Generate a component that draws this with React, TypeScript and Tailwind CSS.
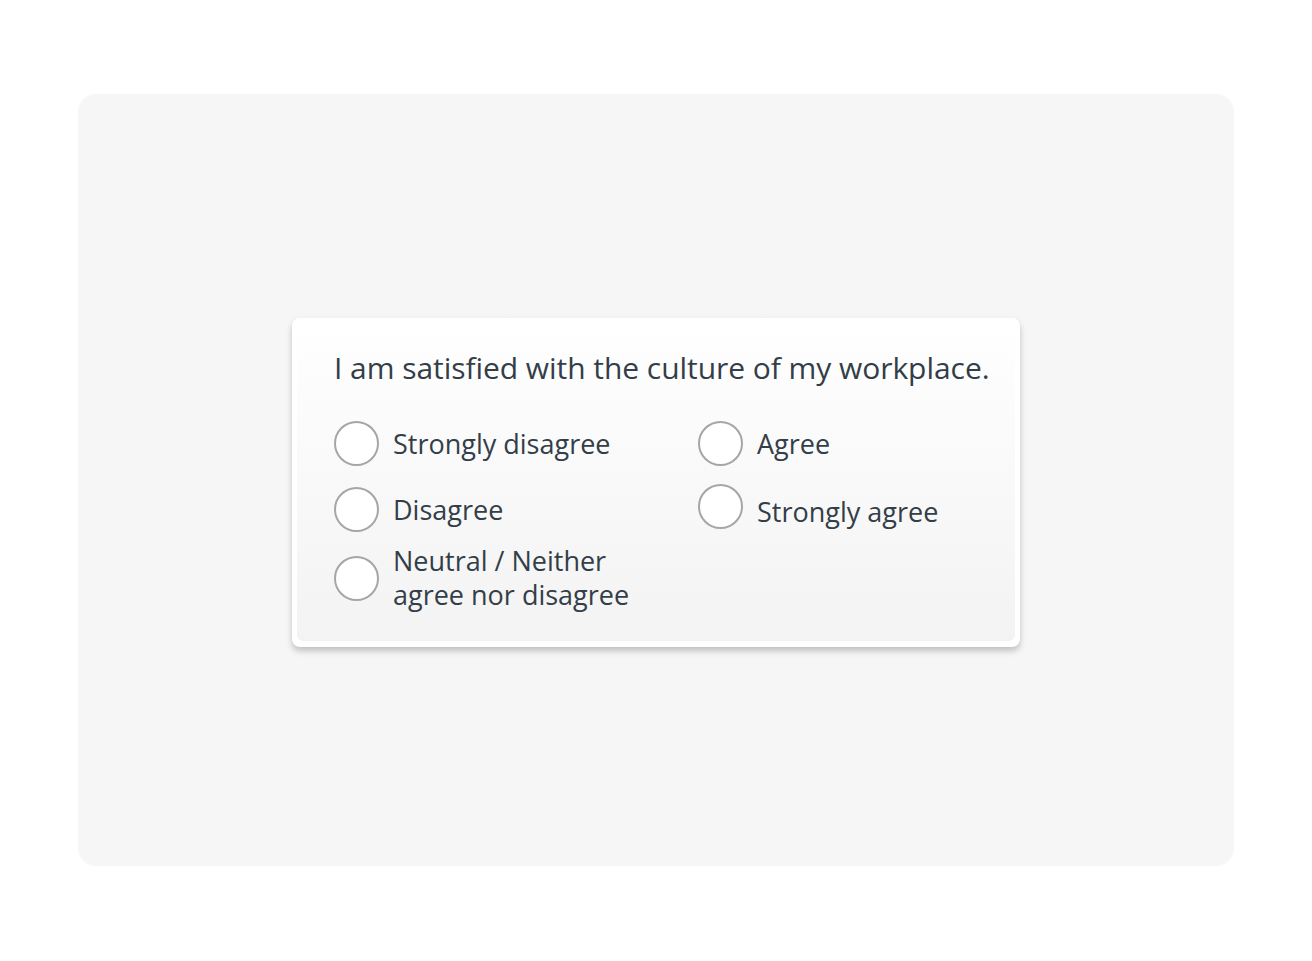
import React from 'react'

const font = { fontFamily: '"Open Sans", "Noto Sans", Arial, sans-serif' }

function Radio({ label, shift = 0 }: { label: React.ReactNode; shift?: number }) {
  return (
    <div className="flex items-center gap-[14px]">
      <span className="block w-[45px] h-[45px] shrink-0 rounded-full border-2 border-[#a6a6a6] bg-white" />
      <span
        className={`text-[27px] leading-[34px] text-[#333e48] ${shift ? 'pt-[10px]' : ''}`}
      >
        {label}
      </span>
    </div>
  )
}

export default function App() {
  return (
    <div className="min-h-[961px] w-full bg-white pt-[94px] px-[78px]" style={font}>
      <div className="h-[772px] rounded-[18px] bg-[#f6f6f6] flex items-start justify-center pt-[224px]">
        <div className="w-[728px] h-[329px] rounded-[8px] bg-white shadow-[0_4px_6px_rgba(0,0,0,0.22)] px-[5px] pb-[6px] flex">
          <div className="flex-1 rounded-b-[6px] bg-gradient-to-b from-white to-[#f3f3f3] pl-[37px] pt-[30px]">
            <h1 className="text-[30px] leading-[40px] text-[#333e48] tracking-[-0.05px]">
              I am satisfied with the culture of my workplace.
            </h1>
            <div className="flex mt-[33px]">
              <div className="w-[364px] flex flex-col">
                <Radio label="Strongly disagree" />
                <div className="mt-[21px]">
                  <Radio label="Disagree" />
                </div>
                <div className="mt-[12px]">
                  <Radio
                    label={
                      <>
                        Neutral / Neither
                        <br />
                        agree nor disagree
                      </>
                    }
                  />
                </div>
              </div>
              <div className="flex flex-col">
                <Radio label="Agree" />
                <div className="mt-[18px]">
                  <Radio label="Strongly agree" shift={1} />
                </div>
              </div>
            </div>
          </div>
        </div>
      </div>
    </div>
  )
}
